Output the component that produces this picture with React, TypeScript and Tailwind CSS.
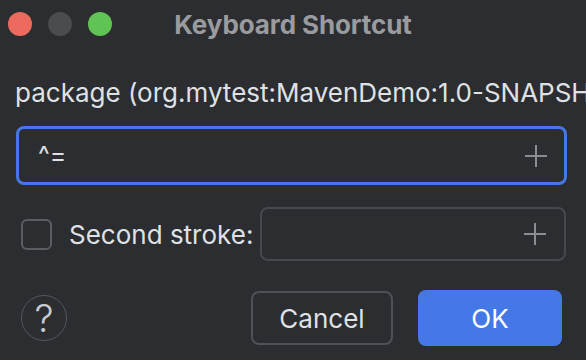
import React from "react";

function PlusIcon() {
  return (
    <svg width="24" height="24" viewBox="0 0 24 24" className="shrink-0">
      <path d="M12 1v22M1 12h22" stroke="#8b8d93" strokeWidth="2" />
    </svg>
  );
}

export default function App() {
  return (
    <div
      className="w-[586px] h-[360px] bg-[#2b2d30] overflow-hidden text-[#dfe1e5]"
      style={{ fontFamily: "Inter, 'Noto Sans', sans-serif" }}
    >
      {/* title bar */}
      <div className="h-[48px] grid grid-cols-[1fr_auto_1fr] items-center">
        <div className="flex items-center gap-[16px] pl-[8px]">
          <span className="w-[24px] h-[24px] rounded-full bg-[#ed6a5e]" />
          <span className="w-[24px] h-[24px] rounded-full bg-[#4b4c50]" />
          <span className="w-[24px] h-[24px] rounded-full bg-[#5fc454]" />
        </div>
        <div className="text-[26px] font-bold text-[#9a9b9f] tracking-[-0.1px]">Keyboard Shortcut</div>
        <div />
      </div>

      <div className="mt-[30px] h-[30px] leading-[30px] pl-[15px] text-[26px] whitespace-nowrap overflow-hidden">
        package (org.mytest:MavenDemo:1.0-SNAPSHOT)
      </div>

      <div className="mt-[18px] mx-[16px] w-[551px] h-[59px] border-[3px] border-[#4677e6] rounded-[8px] flex items-center pl-[19px] pr-[16px]">
        <span className="text-[25px] flex-1">^=</span>
        <PlusIcon />
      </div>

      <div className="mt-[22px] h-[54px] flex items-center">
        <span className="ml-[21px] w-[31px] h-[31px] border-2 border-[#5a5d63] rounded-[6px]" />
        <span className="ml-[17px] text-[26px] w-[191px] whitespace-nowrap">Second stroke:</span>
        <div className="w-[306px] h-[54px] border-2 border-[#45484d] rounded-[8px] flex items-center justify-end pr-[17px]">
          <PlusIcon />
        </div>
      </div>

      <div className="mt-[29px] h-[56px] flex items-center">
        <div className="ml-[21px] w-[46px] h-[46px] rounded-full border-[1.5px] border-[#55585e] flex items-center justify-center text-[38px] leading-none font-light text-[#c9cbd0]">
          ?
        </div>
        <button className="ml-[184px] w-[142px] h-[54px] border-2 border-[#4e5157] rounded-[8px] text-[26px] text-[#dfe1e5]">
          Cancel
        </button>
        <button className="ml-[25px] w-[144px] h-[56px] bg-[#4677e6] rounded-[8px] text-[26px] text-white">
          OK
        </button>
      </div>
    </div>
  );
}
